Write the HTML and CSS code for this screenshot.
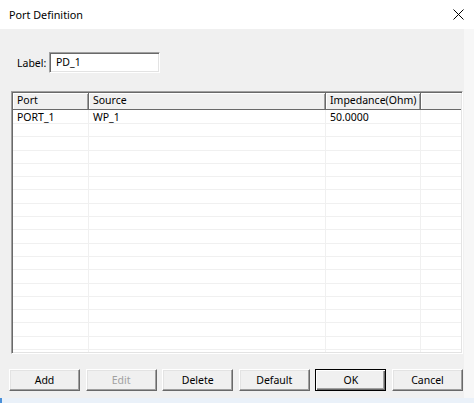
FILE: index.html
```html
<!DOCTYPE html>
<html>
<head>
<meta charset="utf-8">
<link rel="stylesheet" href="styles.css">
</head>
<body>
<div class="window">
  <div class="titlebar">
    <span class="title">Port Definition</span>
    <svg class="close" width="11" height="11" viewBox="0 0 11 11"><path d="M0.5 0.5 L10.5 10.5 M10.5 0.5 L0.5 10.5" stroke="#000" stroke-width="1" fill="none"/></svg>
  </div>
  <div class="frame">
    <div class="client">
      <div class="label-row">
        <span class="label">Label:</span>
        <div class="edit">PD_1</div>
      </div>
      <div class="list">
        <div class="header">
          <div class="hcell c1">Port</div>
          <div class="hcell c2">Source</div>
          <div class="hcell c3">Impedance(Ohm)</div>
          <div class="hfill"></div>
        </div>
        <div class="rows">
          <div class="row first"><div class="cell c1">PORT_1</div><div class="cell c2">WP_1</div><div class="cell c3">50.0000</div><div class="cell c4"></div></div>
          <div class="row"><div class="cell c1"></div><div class="cell c2"></div><div class="cell c3"></div><div class="cell c4"></div></div>
          <div class="row"><div class="cell c1"></div><div class="cell c2"></div><div class="cell c3"></div><div class="cell c4"></div></div>
          <div class="row"><div class="cell c1"></div><div class="cell c2"></div><div class="cell c3"></div><div class="cell c4"></div></div>
          <div class="row"><div class="cell c1"></div><div class="cell c2"></div><div class="cell c3"></div><div class="cell c4"></div></div>
          <div class="row"><div class="cell c1"></div><div class="cell c2"></div><div class="cell c3"></div><div class="cell c4"></div></div>
          <div class="row"><div class="cell c1"></div><div class="cell c2"></div><div class="cell c3"></div><div class="cell c4"></div></div>
          <div class="row"><div class="cell c1"></div><div class="cell c2"></div><div class="cell c3"></div><div class="cell c4"></div></div>
          <div class="row"><div class="cell c1"></div><div class="cell c2"></div><div class="cell c3"></div><div class="cell c4"></div></div>
          <div class="row"><div class="cell c1"></div><div class="cell c2"></div><div class="cell c3"></div><div class="cell c4"></div></div>
          <div class="row"><div class="cell c1"></div><div class="cell c2"></div><div class="cell c3"></div><div class="cell c4"></div></div>
          <div class="row"><div class="cell c1"></div><div class="cell c2"></div><div class="cell c3"></div><div class="cell c4"></div></div>
          <div class="row"><div class="cell c1"></div><div class="cell c2"></div><div class="cell c3"></div><div class="cell c4"></div></div>
          <div class="row"><div class="cell c1"></div><div class="cell c2"></div><div class="cell c3"></div><div class="cell c4"></div></div>
          <div class="row"><div class="cell c1"></div><div class="cell c2"></div><div class="cell c3"></div><div class="cell c4"></div></div>
          <div class="row"><div class="cell c1"></div><div class="cell c2"></div><div class="cell c3"></div><div class="cell c4"></div></div>
          <div class="row"><div class="cell c1"></div><div class="cell c2"></div><div class="cell c3"></div><div class="cell c4"></div></div>
          <div class="row"><div class="cell c1"></div><div class="cell c2"></div><div class="cell c3"></div><div class="cell c4"></div></div>
          <div class="row"><div class="cell c1"></div><div class="cell c2"></div><div class="cell c3"></div><div class="cell c4"></div></div>
        </div>
      </div>
      <div class="buttons">
        <div class="btn">Add</div>
        <div class="btn disabled">Edit</div>
        <div class="btn">Delete</div>
        <div class="btn">Default</div>
        <div class="btn default">OK</div>
        <div class="btn">Cancel</div>
      </div>
    </div>
    <div class="edge"></div>
  </div>
  <div class="bottom"></div>
</div>
</body>
</html>
```
FILE: styles.css
```css
html, body {
  margin: 0;
  padding: 0;
  background: #ffffff;
}
body {
  width: 474px;
  height: 403px;
  overflow: hidden;
  font-family: "Noto Sans", "DejaVu Sans", sans-serif;
  font-size: 10.5px;
  color: #000;
}
.window {
  display: flex;
  flex-direction: column;
  height: 403px;
}
.titlebar {
  height: 29px;
  background: #ffffff;
  display: flex;
  align-items: center;
  justify-content: space-between;
  padding: 0 10px 0 9px;
  font-size: 10.8px;
}
.title {
  margin-top: -1px;
}
.close {
  display: block;
  margin-top: -1px;
}
.frame {
  display: flex;
  height: 369px;
}
.client {
  width: 464px;
  background: #f0f0f0;
  padding: 23px 0 0 9px;
  box-sizing: border-box;
}
.edge {
  flex: 1;
  background: #f7f7f7;
}
.bottom {
  height: 5px;
  background: #eaf1f9;
  border-left: 2px solid #4a90d9;
}
.label-row {
  display: flex;
  align-items: center;
  padding-left: 8px;
  height: 21px;
}
.label {
  width: 32px;
}
.edit {
  width: 111px;
  height: 21px;
  box-sizing: border-box;
  background: #fff;
  border-top: 1px solid #a0a0a0;
  border-left: 1px solid #a0a0a0;
  border-right: 1px solid #ffffff;
  border-bottom: 1px solid #ffffff;
  box-shadow: inset 1px 1px 0 #696969, inset -1px -1px 0 #e3e3e3;
  padding: 0 0 0 6px;
  line-height: 19px;
}
.list {
  margin: 18px 0 0 2px;
  width: 452px;
  height: 263px;
  box-sizing: border-box;
  border-top: 1px solid #a0a0a0;
  border-left: 1px solid #a0a0a0;
  border-right: 1px solid #ffffff;
  border-bottom: 1px solid #ffffff;
  box-shadow: inset 1px 1px 0 #696969, inset -1px -1px 0 #e3e3e3;
  padding: 1px;
  background: #fff;
  overflow: hidden;
  display: flex;
  flex-direction: column;
}
.header {
  display: flex;
  height: 16px;
  flex: none;
  background: #f0f0f0;
  border-bottom: 1px solid #696969;
}
.hcell {
  box-sizing: border-box;
  height: 16px;
  line-height: 15px;
  padding-left: 4px;
  white-space: nowrap;
  overflow: hidden;
  border-right: 1px solid #696969;
  box-shadow: inset 1px 1px 0 #ffffff, inset -1px 0 0 #a0a0a0;
}
.hfill {
  flex: 1;
  box-shadow: inset 1px 1px 0 #ffffff;
}
.c1 { width: 76px; }
.c2 { width: 237px; }
.c3 { width: 95px; }
.c4 { flex: 1; }
.rows {
  flex: 1;
  overflow: hidden;
}
.row {
  display: flex;
  height: 13.3px;
  box-sizing: border-box;
  border-bottom: 1px solid #f0f0f0;
}
.row.first {
  height: 14px;
}
.cell {
  box-sizing: border-box;
  height: 100%;
  border-right: 1px solid #f0f0f0;
  padding-left: 4px;
  line-height: 14px;
  white-space: nowrap;
}
.cell.c4 {
  border-right: none;
}
.buttons {
  display: grid;
  grid-template-columns: repeat(6, 1fr);
  column-gap: 5.6px;
  width: 454px;
  margin-top: 15px;
}
.btn {
  height: 22px;
  box-sizing: border-box;
  background: #f0f0f0;
  border-top: 1px solid #ffffff;
  border-left: 1px solid #ffffff;
  border-right: 1px solid #696969;
  border-bottom: 1px solid #696969;
  box-shadow: inset -1px -1px 0 #a0a0a0, inset 1px 1px 0 #e3e3e3;
  text-align: center;
  line-height: 20px;
}
.btn.disabled {
  color: #a0a0a0;
}
.btn.default {
  border: 1px solid #000;
  box-shadow: inset 1px 1px 0 #ffffff, inset -1px -1px 0 #696969, inset -2px -2px 0 #a0a0a0;
}
```
